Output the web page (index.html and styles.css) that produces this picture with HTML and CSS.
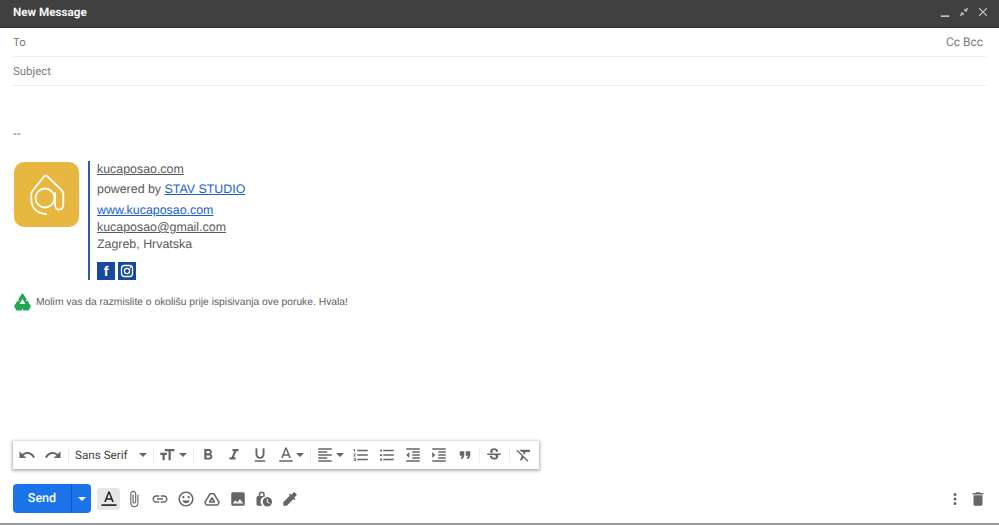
FILE: index.html
```html
<!DOCTYPE html>
<html lang="hr">
<head>
<meta charset="utf-8">
<title>New Message</title>
<link rel="stylesheet" href="styles.css">
</head>
<body>
<div class="compose">
  <header class="titlebar">
    <span class="title">New Message</span>
    <div class="win-controls">
      <svg class="win-icon" viewBox="0 0 12 12"><path d="M1 10h10v2H1z"/></svg>
      <svg class="win-icon" viewBox="0 0 12 12"><path d="M5.500 6.500v4l-1.400-1.400L2 11 1 10l1.900-2.100L1.500 6.500zM6.500 5.500v-4l1.400 1.400L10 1l1 1-1.900 2.100 1.400 1.400z"/></svg>
      <svg class="win-icon" viewBox="0 0 12 12"><path d="M2 1l4 4 4-4 1 1-4 4 4 4-1 1-4-4-4 4-1-1 4-4-4-4z"/></svg>
    </div>
  </header>
  <div class="field"><span class="label">To</span><span>Cc Bcc</span></div>
  <div class="field"><span class="label">Subject</span></div>
  <main class="body">
    <div class="dashes">--</div>
    <div class="signature">
      <svg class="logo" viewBox="0 0 65 65">
        <rect width="65" height="65" rx="10" fill="#e8b740"/>
        <path d="M32 52C23 51.500 17.300 45.500 17.300 37.700V32c0-1.300.4-2.100 1.200-3L30 14.500c1-1.200 2.300-1.200 3.300-.2L47.500 28c1.300 1.200 1.800 2.800 1.800 4.700V42.700c0 6.600-8.300 6.600-8.300 0V31" fill="none" stroke="#fff" stroke-width="1.800" stroke-linejoin="round" stroke-linecap="round"/>
        <circle cx="31" cy="36" r="9.500" fill="none" stroke="#fff" stroke-width="1.800"/>
      </svg>
      <div class="sig-text">
        <a class="sig-line grey-link">kucaposao.com</a>
        <div class="sig-line gap-3">powered by <a class="blue-link">STAV STUDIO</a></div>
        <a class="sig-line gap-4 blue-link">www.kucaposao.com</a>
        <a class="sig-line grey-link">kucaposao@gmail.com</a>
        <div class="sig-line">Zagreb, Hrvatska</div>
        <div class="socials">
          <span class="social fb">f</span>
          <span class="social">
            <svg viewBox="0 0 18 18" width="18" height="18" fill="none" stroke="#fff" stroke-width="1.300"><rect x="3.500" y="3.500" width="11" height="11" rx="3"/><circle cx="9" cy="9" r="2.600"/><circle cx="12.400" cy="5.600" r=".5" fill="#fff" stroke-width=".5"/></svg>
          </span>
        </div>
      </div>
    </div>
    <div class="eco">
      <svg class="eco-icon" viewBox="0 0 19 18">
        <path d="M9.500 1.500L2.200 13.200 4 16.600h11l1.800-3.400z" fill="#22a84f" stroke="#22a84f" stroke-width="2" stroke-linejoin="round"/>
        <path d="M9.500 6l3 5h-6z" fill="#fff"/>
        <path d="M6.200 8L4.400 6.900M12.800 8l1.800-1.100M9.500 16v2" stroke="#fff" stroke-width="1"/>
      </svg>
      <span>Molim vas da razmislite o okolišu prije ispisivanja ove poruke. Hvala!</span>
    </div>
  </main>
  <div class="toolbar">
    <svg class="tb" viewBox="0 0 24 24"><path d="M12.500 8c-2.650 0-5.050.99-6.900 2.600L2 7v9h9l-3.620-3.620c1.390-1.160 3.160-1.880 5.120-1.880 3.540 0 6.550 2.310 7.600 5.500l2.370-.78C21.080 11.030 17.150 8 12.500 8z"/></svg>
    <svg class="tb" viewBox="0 0 24 24"><path d="M18.400 10.600C16.550 8.990 14.150 8 11.500 8c-4.650 0-8.580 3.030-9.960 7.220L3.900 16c1.050-3.190 4.050-5.500 7.600-5.500 1.950 0 3.730.72 5.120 1.880L13 16h9V7l-3.600 3.600z"/></svg>
    <i class="sep sep-a"></i>
    <span class="font-name">Sans Serif</span>
    <i class="caret"></i>
    <i class="sep sep-b"></i>
    <svg class="tb tb-tight" viewBox="0 0 24 24"><path d="M9 4v3h5v12h3V7h5V4H9zm-6 8h3v7h3v-7h3V9H3v3z"/></svg>
    <i class="caret"></i>
    <i class="sep sep-e"></i>
    <svg class="tb" viewBox="0 0 24 24"><path d="M15.600 10.790c.97-.67 1.650-1.770 1.650-2.790 0-2.260-1.750-4-4-4H7v14h7.040c2.090 0 3.710-1.700 3.710-3.790 0-1.520-.86-2.820-2.150-3.420zM10 6.500h3c.83 0 1.500.67 1.500 1.500s-.67 1.500-1.500 1.500h-3v-3zm3.500 9H10v-3h3.500c.83 0 1.500.67 1.500 1.500s-.67 1.500-1.500 1.500z"/></svg>
    <svg class="tb" viewBox="0 0 24 24"><path d="M10 4v3h2.210l-3.420 8H6v3h8v-3h-2.210l3.420-8H18V4z"/></svg>
    <svg class="tb" viewBox="0 0 24 24"><path d="M12 17c3.310 0 6-2.690 6-6V3h-2.500v8c0 1.930-1.570 3.500-3.500 3.500S8.500 12.930 8.500 11V3H6v8c0 3.310 2.690 6 6 6zm-7 2v2h14v-2H5z"/></svg>
    <svg class="tb tb-none" viewBox="0 0 24 24"><path d="M11 2L5.500 16h2.250l1.120-3h6.250l1.120 3h2.250L13 2h-2zM9.620 11L12 4.670 14.380 11H9.620zM3 19h18v2H3z"/></svg>
    <i class="caret"></i>
    <i class="sep sep-e"></i>
    <svg class="tb tb-none" viewBox="0 0 24 24"><path d="M15 15H3v2h12v-2zm0-8H3v2h12V7zM3 13h18v-2H3v2zm0 8h18v-2H3v2zM3 3v2h18V3H3z"/></svg>
    <i class="caret caret-align"></i>
    <svg class="tb" viewBox="0 0 24 24"><path d="M2 17h2v.5H3v1h1v.5H2v1h3v-4H2v1zm1-9h1V4H2v1h1v3zm-1 3h1.800L2 13.100v.9h3v-1H3.200L5 10.900V10H2v1zm5-6v2h14V5H7zm0 14h14v-2H7v2zm0-6h14v-2H7v2z"/></svg>
    <svg class="tb" viewBox="0 0 24 24"><path d="M4 10.500c-.83 0-1.500.67-1.500 1.500s.67 1.500 1.500 1.500 1.500-.67 1.500-1.500-.67-1.500-1.500-1.500zm0-6c-.83 0-1.500.67-1.500 1.500S3.170 7.500 4 7.500 5.500 6.830 5.500 6 4.830 4.500 4 4.500zm0 12c-.83 0-1.500.68-1.500 1.500s.68 1.500 1.500 1.500 1.500-.68 1.500-1.500-.67-1.500-1.500-1.500zM7 19h14v-2H7v2zm0-6h14v-2H7v2zm0-8v2h14V5H7z"/></svg>
    <svg class="tb" viewBox="0 0 24 24"><path d="M11 17h10v-2H11v2zm-8-5l4 4V8l-4 4zm0 9h18v-2H3v2zM3 3v2h18V3H3zm8 6h10V7H11v2zm0 4h10v-2H11v2z"/></svg>
    <svg class="tb" viewBox="0 0 24 24"><path d="M3 21h18v-2H3v2zM3 8v8l4-4-4-4zm8 9h10v-2H11v2zM3 3v2h18V3H3zm8 6h10V7H11v2zm0 4h10v-2H11v2z"/></svg>
    <svg class="tb" viewBox="0 0 24 24"><path d="M6 17h3l2-4V7H5v6h3zm8 0h3l2-4V7h-6v6h3z"/></svg>
    <i class="sep sep-c"></i>
    <svg class="tb" viewBox="0 0 24 24"><path d="M6.850 7.080C6.850 4.370 9.450 3 12.240 3c1.640 0 3 .49 3.900 1.280.77.65 1.460 1.730 1.460 3.240h-3.010c0-.31-.05-.59-.15-.85-.29-.86-1.200-1.280-2.250-1.280-1.860 0-2.340 1.020-2.340 1.700 0 .48.25.88.74 1.210.38.25.77.48 1.410.7H7.390c-.21-.34-.54-.89-.54-1.920zM21 12v-2H3v2h9.620c1.150.45 1.960.75 1.960 1.970 0 1-.81 1.670-2.280 1.670-1.540 0-2.930-.54-2.930-2.510H6.400c0 .55.08 1.130.24 1.580.81 2.290 3.290 3.300 5.670 3.300 2.270 0 5.300-.89 5.300-4.050 0-.3-.01-1.160-.48-1.940H21V12z"/></svg>
    <i class="sep sep-d"></i>
    <svg class="tb" viewBox="0 0 24 24"><path d="M3.270 5L2 6.270l6.970 6.970L6.500 19h3l1.570-3.660L16.730 21 18 19.730 3.550 5.270 3.270 5zM6 5v.18L8.820 8h2.400l-.72 1.680 2.100 2.100L14.210 8H20V5H6z"/></svg>
  </div>
  <footer class="actions">
    <div class="send">
      <span class="send-label">Send</span>
      <span class="send-more"><i class="caret caret-white"></i></span>
    </div>
    <span class="format-toggle">
      <svg class="act" viewBox="0 0 24 24"><path class="ink" d="M11 2L5.500 16h2.250l1.120-3h6.250l1.120 3h2.250L13 2h-2zM9.620 11L12 4.670 14.380 11H9.620z"/><path class="ink" d="M2 19h20v2.200H2z"/></svg>
    </span>
    <div class="act-icons">
      <svg class="act" viewBox="0 0 24 24"><path d="M16.500 6v11.500c0 2.210-1.790 4-4 4s-4-1.790-4-4V5c0-1.380 1.120-2.500 2.500-2.500s2.500 1.120 2.500 2.500v10.500c0 .55-.45 1-1 1s-1-.45-1-1V6H10v9.500c0 1.380 1.120 2.500 2.500 2.500s2.500-1.120 2.500-2.500V5c0-2.210-1.790-4-4-4S7 2.790 7 5v12.500c0 3.040 2.460 5.500 5.500 5.500s5.500-2.460 5.500-5.500V6h-1.500z"/></svg>
      <svg class="act" viewBox="0 0 24 24"><path d="M3.900 12c0-1.710 1.390-3.100 3.100-3.100h4V7H7c-2.760 0-5 2.240-5 5s2.240 5 5 5h4v-1.900H7c-1.710 0-3.100-1.390-3.100-3.100zM8 13h8v-2H8v2zm9-6h-4v1.900h4c1.710 0 3.100 1.390 3.100 3.100s-1.390 3.100-3.100 3.100h-4V17h4c2.760 0 5-2.240 5-5s-2.240-5-5-5z"/></svg>
      <svg class="act" viewBox="0 0 24 24"><path d="M11.990 2C6.470 2 2 6.480 2 12s4.470 10 9.990 10C17.520 22 22 17.520 22 12S17.520 2 11.990 2zM12 20c-4.420 0-8-3.580-8-8s3.580-8 8-8 8 3.580 8 8-3.580 8-8 8zm3.500-9c.83 0 1.500-.67 1.500-1.500S16.330 8 15.500 8 14 8.670 14 9.500s.67 1.500 1.500 1.500zm-7 0c.83 0 1.500-.67 1.500-1.500S9.330 8 8.500 8 7 8.670 7 9.500 7.670 11 8.500 11zm3.500 6.500c2.330 0 4.310-1.460 5.110-3.500H6.890c.8 2.040 2.780 3.500 5.110 3.500z"/></svg>
      <svg class="act" viewBox="0 0 24 24"><path fill="none" stroke="#666" stroke-width="2" stroke-linejoin="round" d="M9.500 5h5l7 11.500-2 3.500h-15l-2-3.500zM12 10.500l-3.300 5.500h6.600z"/></svg>
      <svg class="act" viewBox="0 0 24 24"><path d="M21 19V5c0-1.100-.9-2-2-2H5c-1.100 0-2 .9-2 2v14c0 1.100.9 2 2 2h14c1.100 0 2-.9 2-2zM8.500 13.500l2.500 3.010L14.500 12l4.500 6H5l3.500-4.500z"/></svg>
      <svg class="act" viewBox="0 0 24 24"><path d="M13 8.500V6a4 4 0 0 0-8 0v2H4a2 2 0 0 0-2 2v9a2 2 0 0 0 2 2h6.300A7 7 0 0 1 13 8.500zM7 6a2 2 0 0 1 4 0v2H7z"/><path fill-rule="evenodd" d="M16.500 9.500a6.250 6.250 0 1 0 0 12.500 6.250 6.250 0 0 0 0-12.500zm-.8 2.500h1.400v3.600l2.700 1.600-.7 1.100-3.400-2z"/></svg>
      <svg class="act" viewBox="0 0 24 24"><path d="M20.710 5.630l-2.340-2.340c-.39-.39-1.020-.39-1.410 0l-3.120 3.120-1.930-1.910-1.410 1.410 1.420 1.420L3 16.250V21h4.750l8.920-8.920 1.420 1.420 1.410-1.410-1.920-1.920 3.120-3.120c.4-.4.4-1.030.01-1.420z"/></svg>
    </div>
    <div class="act-right">
      <svg class="act" viewBox="0 0 24 24"><path d="M12 8a2 2 0 1 0 0-4 2 2 0 0 0 0 4zm0 2a2 2 0 1 0 0 4 2 2 0 0 0 0-4zm0 6a2 2 0 1 0 0 4 2 2 0 0 0 0-4z"/></svg>
      <svg class="act" viewBox="0 0 24 24"><path d="M6 19c0 1.100.9 2 2 2h8c1.100 0 2-.9 2-2V7H6v12zM19 4h-3.500l-1-1h-5l-1 1H5v2h14V4z"/></svg>
    </div>
  </footer>
</div>
</body>
</html>
```
FILE: styles.css
```css
* { box-sizing: border-box; }
html, body { margin: 0; height: 100%; overflow: hidden; background: #fff; }
.compose {
  height: 525px;
  display: flex;
  flex-direction: column;
  font-family: Roboto, "Liberation Sans", sans-serif;
  text-rendering: geometricPrecision;
  border-bottom: 2px solid #9a9a9a;
}
.titlebar {
  height: 28px;
  flex: none;
  background: #404040;
  border-bottom: 1px solid #2e2e2e;
  display: flex;
  align-items: center;
  justify-content: space-between;
  padding: 0 11px 3px 13px;
  color: #fff;
}
.title { font-size: 11.7px; font-weight: 700; color: #f4f4f4; }
.win-controls { display: flex; gap: 9px; align-items: center; }
.win-icon { width: 10px; height: 10px; fill: #c4c4c4; }
.field {
  height: 29px;
  flex: none;
  margin: 0 13px;
  border-bottom: 1px solid #eeeeee;
  display: flex;
  justify-content: space-between;
  align-items: center;
  padding-right: 3px;
  font-size: 12px;
  color: #7c7c7c;
}
.label { font-size: 11.4px; }
.body {
  flex: 1;
  min-height: 0;
  padding: 40px 0 0 13px;
  font-family: "Liberation Sans", Arial, sans-serif;
  color: #555;
}
.dashes { height: 17px; line-height: 17px; font-size: 11px; color: #555; }
.signature { display: flex; margin-top: 18px; }
.logo { width: 65px; height: 65px; margin: 1px 9px 0 1px; flex: none; }
.sig-text {
  height: 119px;
  border-left: 2px solid #2f5da8;
  padding-left: 7px;
  display: flex;
  flex-direction: column;
  align-items: flex-start;
  font-size: 12.4px;
  color: #5a5a5a;
}
.sig-line { display: block; height: 17px; line-height: 17px; white-space: nowrap; }
.gap-3 { margin-top: 3px; }
.gap-4 { margin-top: 4px; }
.grey-link { color: #5a5a5a; text-decoration: underline; }
.blue-link { color: #1a5fd0; text-decoration: underline; }
.socials { display: flex; gap: 3px; margin-top: 9px; }
.social {
  width: 18px;
  height: 18px;
  background: #174a9f;
  display: block;
}
.fb {
  color: #fff;
  font-weight: 700;
  font-size: 14px;
  line-height: 19px;
  text-align: center;
}
.eco {
  display: flex;
  align-items: center;
  gap: 4px;
  margin-top: 13px;
  height: 18px;
  font-size: 10.3px;
  color: #606060;
}
.eco-icon { width: 19px; height: 18px; flex: none; }
.toolbar {
  height: 28px;
  flex: none;
  width: 526px;
  margin: 0 0 15px 13px;
  background: #fff;
  box-shadow: 0 1px 3px 1px rgba(0,0,0,.3);
  display: flex;
  align-items: center;
  padding-left: 1px;
}
.tb { width: 18px; height: 18px; margin: 0 4px; flex: none; fill: #666; }
.tb-tight { margin-right: 3px; }
.tb-none { margin-right: 1px; }
.sep { width: 1px; height: 16px; background: #ededed; flex: none; }
.sep-a { margin: 0 6px 0 2px; }
.sep-b { margin: 0 0 0 6px; }
.sep-e { margin: 0 1px 0 6px; }
.sep-c { margin: 0 1px 0 1px; }
.sep-d { margin: 0 1px 0 2px; }
.font-name { width: 64px; font-size: 11.7px; color: #444; flex: none; }
.caret {
  width: 0;
  height: 0;
  flex: none;
  border-left: 4px solid transparent;
  border-right: 4px solid transparent;
  border-top: 4px solid #666;
}
.caret-align { margin: 0 4px 0 1px; }
.caret-white { border-top-color: #fff; }
.actions {
  height: 29px;
  flex: none;
  margin: 0 0 10px;
  padding: 0 12px 0 13px;
  display: flex;
  align-items: center;
}
.send {
  width: 78px;
  height: 29px;
  background: #1a73e8;
  border-radius: 4px;
  display: flex;
  color: #fff;
  font-size: 12.5px;
  font-weight: 500;
  flex: none;
}
.send-label { width: 58px; line-height: 29px; text-align: center; }
.send-more {
  flex: 1;
  border-left: 1px solid #1259b8;
  display: flex;
  align-items: center;
  justify-content: center;
}
.format-toggle {
  width: 23px;
  height: 22px;
  margin-left: 6px;
  background: #e6e6e6;
  border-radius: 3px;
  display: flex;
  align-items: center;
  justify-content: center;
  flex: none;
}
.act { width: 18px; height: 18px; fill: #666; flex: none; }
.ink { fill: #222; }
.act-icons { display: flex; gap: 8px; margin-left: 5px; }
.act-right { display: flex; gap: 5px; margin-left: auto; }
```
